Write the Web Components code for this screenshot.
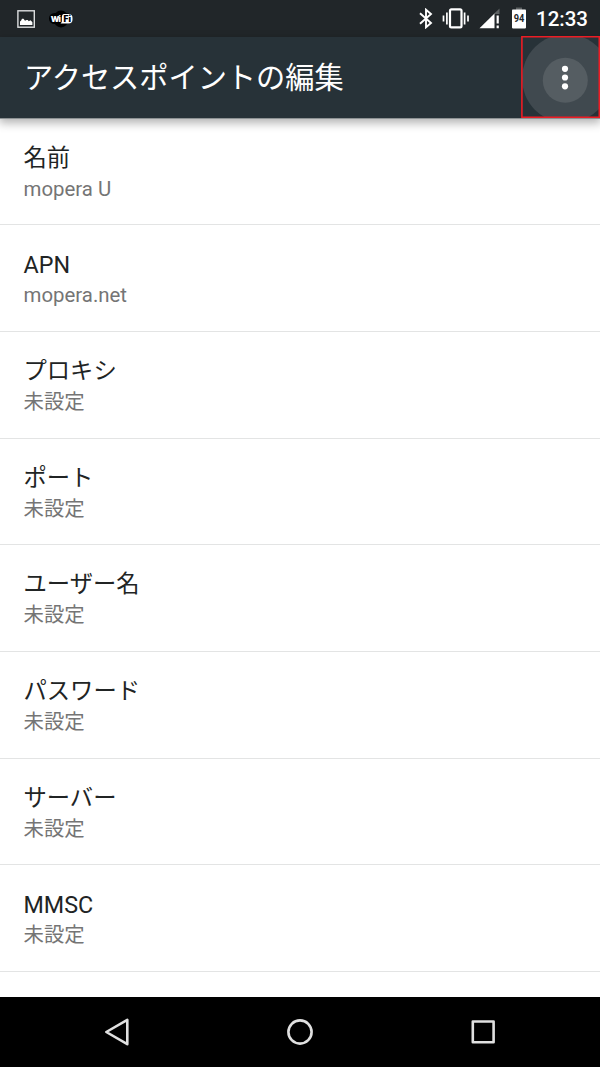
<!DOCTYPE html>
<html lang="ja">
<head>
<meta charset="utf-8">
<title>アクセスポイントの編集</title>
<style>
  body {
    margin: 0;
    background: #fff;
    font-family: Roboto, "Noto Sans CJK JP", sans-serif;
  }
</style>
</head>
<body>
<phone-screen>
  <status-bar slot="status" battery="94">12:33</status-bar>
  <app-bar slot="header">アクセスポイントの編集</app-bar>
  <setting-row label="名前">mopera U</setting-row>
  <setting-row label="APN" latin>mopera.net</setting-row>
  <setting-row label="プロキシ">未設定</setting-row>
  <setting-row label="ポート">未設定</setting-row>
  <setting-row label="ユーザー名">未設定</setting-row>
  <setting-row label="パスワード">未設定</setting-row>
  <setting-row label="サーバー">未設定</setting-row>
  <setting-row label="MMSC" latin>未設定</setting-row>
  <nav-bar slot="footer"></nav-bar>
</phone-screen>

<script>
// Full screen frame: status, header, scrolling list, navigation
class PhoneScreen extends HTMLElement {
  constructor() {
    super();
    this.attachShadow({ mode: "open" });
    this.shadowRoot.innerHTML = `
      <style>
        :host {
          display: grid;
          grid-template-rows: 37px 81px 1fr 70px;
          width: 600px;
          height: 1067px;
          overflow: hidden;
        }
        main {
          overflow: hidden;
          padding-top: .6px;
          background: #fff;
        }
      </style>
      <slot name="status"></slot>
      <slot name="header"></slot>
      <main><slot></slot></main>
      <slot name="footer"></slot>
    `;
  }
}

class StatusBar extends HTMLElement {
  constructor() {
    super();
    this.attachShadow({ mode: "open" });
    this.shadowRoot.innerHTML = `
      <style>
        :host {
          display: flex;
          justify-content: space-between;
          align-items: center;
          box-sizing: border-box;
          padding: 0 12px 0 17px;
          background: #212629;
          color: #fff;
        }
        .group {
          display: flex;
          align-items: center;
        }
        svg { display: block; }
        .wifi { margin-left: 14px; }
        .vibrate { margin-left: 9px; }
        .signal { margin-left: 9px; }
        .battery { margin: -1px 0 0 12px; }
        .clock {
          margin-left: 10px;
          padding-top: 1px;
          font-size: 20.5px;
          font-weight: 500;
          line-height: 24px;
        }
      </style>
      <div class="group">
        <svg width="18" height="18" viewBox="0 0 18 18">
          <rect x=".9" y=".8" width="16.4" height="16.4" fill="none" stroke="#dcdedf" stroke-width="1.4"/>
          <path d="M3 15V11.500l1-.8 1-1.900 1.500 0 1.500 1.900 1.500-.8 1.200 0 1.100 1.400 1.600-1 1.400 1.200 .6.700V15z" fill="#fff"/>
        </svg>
        <svg class="wifi" width="24" height="18" viewBox="0 0 24 18">
          <ellipse cx="12" cy="9" rx="7.5" ry="8.5" fill="#000"/>
          <rect x="0" y="3" width="23" height="11" rx="5.5" fill="#000"/>
          <path d="M15 4h4.500a4 4 0 0 1 4 4v1.500a4 4 0 0 1-4 4H11.500c1.800-1 1.300-2.800 1.300-5.500 0-2.500.7-4 2.200-4z" fill="#fff"/>
          <text x="1.800" y="11.800" font-family="Inter" font-size="8" font-weight="900" fill="#fff" textLength="10">Wi</text>
          <text x="14.400" y="12" font-family="Inter" font-size="8.500" font-weight="900" fill="#000" textLength="7.500">Fi</text>
        </svg>
      </div>
      <div class="group">
        <svg width="14" height="21" viewBox="0 0 14 21">
          <path d="M1 5.200 12 15 7 19.300V1.700L12 6 1 15.800" fill="none" stroke="#fff" stroke-width="1.900"/>
        </svg>
        <svg class="vibrate" width="28" height="21" viewBox="0 0 28 21">
          <rect x="8" y="1.400" width="11.500" height="18" rx="1.400" fill="none" stroke="#fff" stroke-width="2.200"/>
          <path d="M4.900 4.500v12M1.500 7.500v6M22.600 4.500v12M26 7.500v6" stroke="#fff" stroke-width="1.700"/>
        </svg>
        <svg class="signal" width="21" height="21" viewBox="0 0 21 21">
          <path d="M15 5.800 20.500.5V6H15z" fill="#5d6163"/>
          <path d="M.5 20.300 15.500 5.500V20.300z" fill="#fff"/>
          <path d="M17.600 7.500h2.200v8h-2.200zM17.600 17.600h2.200v2.700h-2.200z" fill="#fff"/>
        </svg>
        <svg class="battery" width="14" height="22" viewBox="0 0 14 22">
          <path d="M4 .5h6V3H4z" fill="#5d6163"/>
          <rect y="2.400" width="14" height="19" rx=".8" fill="#fff"/>
          <text class="level" x="7" y="15.200" text-anchor="middle" font-family="Roboto" font-size="10.500" font-weight="700" fill="#212629" textLength="10.600" lengthAdjust="spacingAndGlyphs"></text>
        </svg>
        <span class="clock"><slot></slot></span>
      </div>
    `;
  }

  connectedCallback() {
    this.shadowRoot.querySelector(".level").textContent =
      this.getAttribute("battery") || "";
  }
}

class AppBar extends HTMLElement {
  constructor() {
    super();
    this.attachShadow({ mode: "open" });
    this.shadowRoot.innerHTML = `
      <style>
        :host {
          display: flex;
          justify-content: space-between;
          position: relative;
          z-index: 1;
          background: #273238;
          color: #fff;
          box-shadow: 0 1px 0 #8d9294, 0 4px 9px 1px rgba(0, 0, 0, .3);
        }
        h1 {
          margin: 0;
          padding-left: 24px;
          font-size: 29.2px;
          font-weight: 400;
          line-height: 83px;
        }
        overflow-button {
          margin-top: -1px;
        }
      </style>
      <h1><slot></slot></h1>
      <overflow-button></overflow-button>
    `;
  }
}

// Three dot menu button in its pressed state
class OverflowButton extends HTMLElement {
  constructor() {
    super();
    this.attachShadow({ mode: "open" });
    this.shadowRoot.innerHTML = `
      <style>
        :host {
          display: block;
          width: 79px;
          height: 82px;
        }
        svg { display: block; }
      </style>
      <svg width="79" height="82" viewBox="0 0 79 82">
        <circle cx="45.500" cy="42.500" r="44.500" fill="#40494f"/>
        <circle cx="44.300" cy="44.300" r="22.500" fill="#555d62"/>
        <g fill="#fff">
          <circle cx="44" cy="32.800" r="3.100"/>
          <circle cx="44" cy="41.500" r="3.100"/>
          <circle cx="44" cy="50.300" r="3.100"/>
        </g>
        <rect x=".9" y=".7" width="77.400" height="80.600" fill="none" stroke="#ed1c24" stroke-width="1.600"/>
      </svg>
    `;
  }
}

class SettingRow extends HTMLElement {
  constructor() {
    super();
    this.attachShadow({ mode: "open" });
    this.shadowRoot.innerHTML = `
      <style>
        :host {
          display: block;
          box-sizing: border-box;
          height: 106.7px;
          padding: 22px 24px 0 23.5px;
          border-bottom: 1px solid #e3e4e4;
        }
        .label {
          height: 34px;
          color: #212424;
          font-size: 23.3px;
          line-height: 35px;
        }
        :host([latin]) .label {
          line-height: 37px;
        }
        .value {
          color: #757575;
          font-size: 20.4px;
          line-height: 28px;
        }
      </style>
      <div class="label"></div>
      <div class="value"><slot></slot></div>
    `;
  }

  connectedCallback() {
    this.shadowRoot.querySelector(".label").textContent =
      this.getAttribute("label") || "";
  }
}

class NavBar extends HTMLElement {
  constructor() {
    super();
    this.attachShadow({ mode: "open" });
    this.shadowRoot.innerHTML = `
      <style>
        :host {
          display: grid;
          grid-template-columns: repeat(3, 183.3px);
          justify-content: center;
          align-items: center;
          justify-items: center;
          background: #000;
        }
        svg {
          display: block;
          fill: none;
          stroke: #e0e0e0;
          stroke-width: 2.6;
          stroke-linejoin: round;
        }
      </style>
      <svg width="30" height="30" viewBox="0 0 30 30"><path d="M4.300 15 25.300 2.800V27.200z"/></svg>
      <svg width="30" height="30" viewBox="0 0 30 30"><circle cx="15" cy="15" r="11.600"/></svg>
      <svg width="30" height="30" viewBox="0 0 30 30"><rect x="4.800" y="4.500" width="20.800" height="20.800"/></svg>
    `;
  }
}

customElements.define("phone-screen", PhoneScreen);
customElements.define("status-bar", StatusBar);
customElements.define("overflow-button", OverflowButton);
customElements.define("app-bar", AppBar);
customElements.define("setting-row", SettingRow);
customElements.define("nav-bar", NavBar);
</script>
</body>
</html>
